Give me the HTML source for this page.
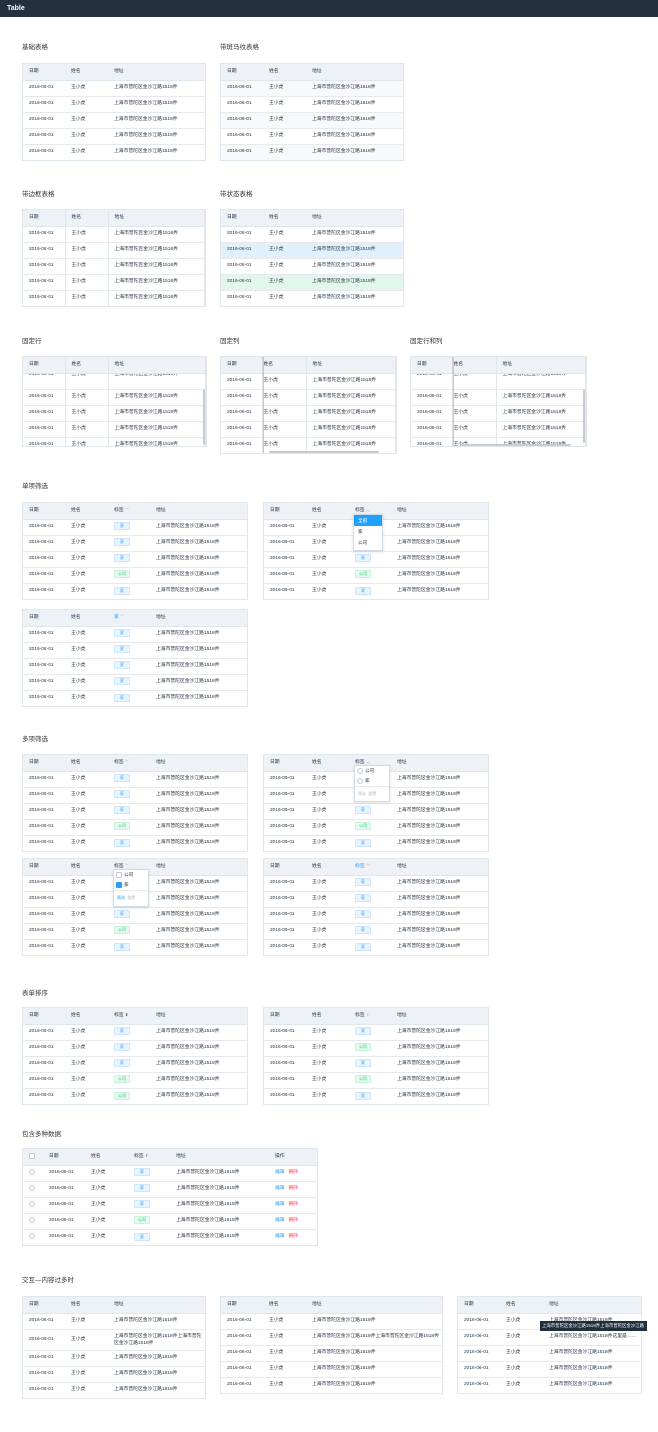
<!DOCTYPE html>
<html><head><meta charset="utf-8"><style>
*{margin:0;padding:0;box-sizing:border-box}
body{width:658px;height:1432px;background:#fff;position:relative;overflow:hidden;font-family:"Liberation Sans","Noto Sans CJK SC",sans-serif;color:#1f2d3d}
.hd{position:absolute;left:0;top:0;width:658px;height:17px;background:#233040;color:#fff;font-weight:bold;font-size:7px;line-height:17px;padding-left:7px}
.ti{position:absolute;font-size:6.5px;color:#333;line-height:8px}
.w{position:absolute;border:1px solid #dfe6ec;overflow:hidden;background:#fff}
table{border-collapse:collapse;table-layout:fixed;width:100%;font-size:4.8px}
th{background:#eef1f6;height:16px;line-height:8px;vertical-align:middle;text-align:left;font-weight:normal;padding-left:6px;border-bottom:1px solid #dfe6ec;white-space:nowrap;overflow:hidden}
td{height:16px;line-height:8px;vertical-align:middle;padding-left:6px;border-bottom:1px solid #e6eaef;white-space:nowrap;overflow:hidden}
tr:last-child td{border-bottom:0}
.bd td,.bd th{border-right:1px solid #dfe6ec}
.st tr:nth-child(even) td{background:#f8f9fb}
.bl td{background:#e2f0fe}.gr td{background:#e2f7ec}
.tg{display:inline-block;width:16px;height:8px;line-height:6px;text-align:center;font-size:4px;border:1px solid #cde6fd;background:#e8f4ff;color:#20a0ff;border-radius:1px;vertical-align:middle}
.tg.g{border-color:#c9f2dc;background:#e7f9f0;color:#13ce66}
.ar{color:#999;font-size:4px}
.dd{position:absolute;background:#fff;border:1px solid #d1dbe5;box-shadow:0 1px 3px rgba(0,0,0,.12);font-size:4.6px;z-index:5}
.dd div{height:11px;line-height:11px;padding-left:4px}
.cb{display:inline-block;width:6px;height:6px;border:1px solid #bfcbd9;border-radius:1px;vertical-align:middle;margin-right:2px;background:#fff}
.rd{border-radius:50%}
.ck{background:#20a0ff;border-color:#20a0ff;position:relative}
.op{color:#20a0ff}.del{color:#ff4949;margin-left:4px}
.sb{position:absolute;background:#c8ccd2;border-radius:1px}
</style></head><body>
<div class="hd">Table</div>

<div class="ti" style="left:22px;top:44px">基础表格</div>
<div class="ti" style="left:220px;top:44px">带斑马纹表格</div>
<div class="w" style="left:22px;top:63px;width:184px"><table><colgroup><col style="width:42px"><col style="width:43px"><col></colgroup>
<tr><th>日期</th><th>姓名</th><th>地址</th></tr>
<tr><td>2016-06-01</td><td>王小虎</td><td>上海市普陀区金沙江路1518弄</td></tr>
<tr><td>2016-06-01</td><td>王小虎</td><td>上海市普陀区金沙江路1518弄</td></tr>
<tr><td>2016-06-01</td><td>王小虎</td><td>上海市普陀区金沙江路1518弄</td></tr>
<tr><td>2016-06-01</td><td>王小虎</td><td>上海市普陀区金沙江路1518弄</td></tr>
<tr><td>2016-06-01</td><td>王小虎</td><td>上海市普陀区金沙江路1518弄</td></tr></table></div>
<div class="w" style="left:220px;top:63px;width:184px"><table class="st"><colgroup><col style="width:42px"><col style="width:43px"><col></colgroup>
<tr><th>日期</th><th>姓名</th><th>地址</th></tr>
<tr><td>2016-06-01</td><td>王小虎</td><td>上海市普陀区金沙江路1518弄</td></tr>
<tr><td>2016-06-01</td><td>王小虎</td><td>上海市普陀区金沙江路1518弄</td></tr>
<tr><td>2016-06-01</td><td>王小虎</td><td>上海市普陀区金沙江路1518弄</td></tr>
<tr><td>2016-06-01</td><td>王小虎</td><td>上海市普陀区金沙江路1518弄</td></tr>
<tr><td>2016-06-01</td><td>王小虎</td><td>上海市普陀区金沙江路1518弄</td></tr></table></div>

<div class="ti" style="left:22px;top:191px">带边框表格</div>
<div class="ti" style="left:220px;top:191px">带状态表格</div>
<div class="w" style="left:22px;top:209px;width:184px"><table class="bd"><colgroup><col style="width:42px"><col style="width:43px"><col></colgroup>
<tr><th>日期</th><th>姓名</th><th>地址</th></tr>
<tr><td>2016-06-01</td><td>王小虎</td><td>上海市普陀区金沙江路1518弄</td></tr>
<tr><td>2016-06-01</td><td>王小虎</td><td>上海市普陀区金沙江路1518弄</td></tr>
<tr><td>2016-06-01</td><td>王小虎</td><td>上海市普陀区金沙江路1518弄</td></tr>
<tr><td>2016-06-01</td><td>王小虎</td><td>上海市普陀区金沙江路1518弄</td></tr>
<tr><td>2016-06-01</td><td>王小虎</td><td>上海市普陀区金沙江路1518弄</td></tr></table></div>
<div class="w" style="left:220px;top:209px;width:184px"><table><colgroup><col style="width:42px"><col style="width:43px"><col></colgroup>
<tr><th>日期</th><th>姓名</th><th>地址</th></tr>
<tr><td>2016-06-01</td><td>王小虎</td><td>上海市普陀区金沙江路1518弄</td></tr>
<tr class="bl"><td>2016-06-01</td><td>王小虎</td><td>上海市普陀区金沙江路1518弄</td></tr>
<tr><td>2016-06-01</td><td>王小虎</td><td>上海市普陀区金沙江路1518弄</td></tr>
<tr class="gr"><td>2016-06-01</td><td>王小虎</td><td>上海市普陀区金沙江路1518弄</td></tr>
<tr><td>2016-06-01</td><td>王小虎</td><td>上海市普陀区金沙江路1518弄</td></tr></table></div>

<div class="ti" style="left:22px;top:338px">固定行</div>
<div class="ti" style="left:220px;top:338px">固定列</div>
<div class="ti" style="left:410px;top:338px">固定行和列</div>
<div class="w" style="left:22px;top:356px;width:185px;height:91px"><table class="bd"><colgroup><col style="width:42px"><col style="width:43px"><col></colgroup>
<tr><th>日期</th><th>姓名</th><th>地址</th></tr>
<tr><td style="height:8px;line-height:2px;vertical-align:top">2016-06-01</td><td style="line-height:2px;vertical-align:top">王小虎</td><td style="line-height:2px;vertical-align:top">上海市普陀区金沙江路1518弄</td></tr>
<tr><td>2016-06-01</td><td>王小虎</td><td>上海市普陀区金沙江路1518弄</td></tr>
<tr><td>2016-06-01</td><td>王小虎</td><td>上海市普陀区金沙江路1518弄</td></tr>
<tr><td>2016-06-01</td><td>王小虎</td><td>上海市普陀区金沙江路1518弄</td></tr>
<tr><td>2016-06-01</td><td>王小虎</td><td>上海市普陀区金沙江路1518弄</td></tr></table>
<div class="sb" style="left:180px;top:32px;width:2px;height:56px"></div></div>
<div class="w" style="left:220px;top:356px;width:177px;height:98px"><table class="bd"><colgroup><col style="width:42px"><col style="width:43px"><col></colgroup>
<tr><th>日期</th><th style="padding-left:0">姓名</th><th>地址</th></tr>
<tr><td>2016-06-01</td><td style="padding-left:0">王小虎</td><td>上海市普陀区金沙江路1518弄</td></tr>
<tr><td>2016-06-01</td><td style="padding-left:0">王小虎</td><td>上海市普陀区金沙江路1518弄</td></tr>
<tr><td>2016-06-01</td><td style="padding-left:0">王小虎</td><td>上海市普陀区金沙江路1518弄</td></tr>
<tr><td>2016-06-01</td><td style="padding-left:0">王小虎</td><td>上海市普陀区金沙江路1518弄</td></tr>
<tr><td>2016-06-01</td><td style="padding-left:0">王小虎</td><td>上海市普陀区金沙江路1518弄</td></tr></table>
<div style="position:absolute;left:41px;top:0;width:2px;height:98px;background:rgba(0,0,0,.12)"></div>
<div class="sb" style="left:48px;top:94px;width:110px;height:2px"></div></div>
<div class="w" style="left:410px;top:356px;width:177px;height:91px"><table class="bd"><colgroup><col style="width:42px"><col style="width:43px"><col></colgroup>
<tr><th>日期</th><th style="padding-left:0">姓名</th><th>地址</th></tr>
<tr><td style="height:8px;line-height:2px;vertical-align:top">2016-06-01</td><td style="padding-left:0;line-height:2px;vertical-align:top">王小虎</td><td style="line-height:2px;vertical-align:top">上海市普陀区金沙江路1518弄</td></tr>
<tr><td>2016-06-01</td><td style="padding-left:0">王小虎</td><td>上海市普陀区金沙江路1518弄</td></tr>
<tr><td>2016-06-01</td><td style="padding-left:0">王小虎</td><td>上海市普陀区金沙江路1518弄</td></tr>
<tr><td>2016-06-01</td><td style="padding-left:0">王小虎</td><td>上海市普陀区金沙江路1518弄</td></tr>
<tr><td>2016-06-01</td><td style="padding-left:0">王小虎</td><td>上海市普陀区金沙江路1518弄</td></tr></table>
<div style="position:absolute;left:41px;top:0;width:2px;height:91px;background:rgba(0,0,0,.12)"></div>
<div class="sb" style="left:172px;top:32px;width:2px;height:54px"></div>
<div class="sb" style="left:50px;top:87px;width:110px;height:2px"></div></div>

<div class="ti" style="left:22px;top:483px">单项筛选</div>
<div class="w" style="left:22px;top:502px;width:226px"><table><colgroup><col style="width:42px"><col style="width:43px"><col style="width:42px"><col></colgroup>
<tr><th>日期</th><th>姓名</th><th>标签 <span class="ar">﹀</span></th><th>地址</th></tr>
<tr><td>2016-06-01</td><td>王小虎</td><td><span class="tg">家</span></td><td>上海市普陀区金沙江路1518弄</td></tr>
<tr><td>2016-06-01</td><td>王小虎</td><td><span class="tg">家</span></td><td>上海市普陀区金沙江路1518弄</td></tr>
<tr><td>2016-06-01</td><td>王小虎</td><td><span class="tg">家</span></td><td>上海市普陀区金沙江路1518弄</td></tr>
<tr><td>2016-06-01</td><td>王小虎</td><td><span class="tg g">公司</span></td><td>上海市普陀区金沙江路1518弄</td></tr>
<tr><td>2016-06-01</td><td>王小虎</td><td><span class="tg">家</span></td><td>上海市普陀区金沙江路1518弄</td></tr></table></div>
<div class="w" style="left:263px;top:502px;width:226px"><table><colgroup><col style="width:42px"><col style="width:43px"><col style="width:42px"><col></colgroup>
<tr><th>日期</th><th>姓名</th><th>标签 <span class="ar">︿</span></th><th>地址</th></tr>
<tr><td>2016-06-01</td><td>王小虎</td><td><span class="tg">家</span></td><td>上海市普陀区金沙江路1518弄</td></tr>
<tr><td>2016-06-01</td><td>王小虎</td><td><span class="tg">家</span></td><td>上海市普陀区金沙江路1518弄</td></tr>
<tr><td>2016-06-01</td><td>王小虎</td><td><span class="tg">家</span></td><td>上海市普陀区金沙江路1518弄</td></tr>
<tr><td>2016-06-01</td><td>王小虎</td><td><span class="tg g">公司</span></td><td>上海市普陀区金沙江路1518弄</td></tr>
<tr><td>2016-06-01</td><td>王小虎</td><td><span class="tg">家</span></td><td>上海市普陀区金沙江路1518弄</td></tr></table></div>
<div class="dd" style="left:353px;top:514px;width:30px;height:37px"><div style="background:#20a0ff;color:#fff">全部</div><div>家</div><div>公司</div></div>
<div class="w" style="left:22px;top:609px;width:226px"><table><colgroup><col style="width:42px"><col style="width:43px"><col style="width:42px"><col></colgroup>
<tr><th>日期</th><th>姓名</th><th style="color:#20a0ff">家 <span class="ar">﹀</span></th><th>地址</th></tr>
<tr><td>2016-06-01</td><td>王小虎</td><td><span class="tg">家</span></td><td>上海市普陀区金沙江路1518弄</td></tr>
<tr><td>2016-06-01</td><td>王小虎</td><td><span class="tg">家</span></td><td>上海市普陀区金沙江路1518弄</td></tr>
<tr><td>2016-06-01</td><td>王小虎</td><td><span class="tg">家</span></td><td>上海市普陀区金沙江路1518弄</td></tr>
<tr><td>2016-06-01</td><td>王小虎</td><td><span class="tg">家</span></td><td>上海市普陀区金沙江路1518弄</td></tr>
<tr><td>2016-06-01</td><td>王小虎</td><td><span class="tg">家</span></td><td>上海市普陀区金沙江路1518弄</td></tr></table></div>

<div class="ti" style="left:22px;top:736px">多项筛选</div>
<div class="w" style="left:22px;top:754px;width:226px"><table><colgroup><col style="width:42px"><col style="width:43px"><col style="width:42px"><col></colgroup>
<tr><th>日期</th><th>姓名</th><th>标签 <span class="ar">﹀</span></th><th>地址</th></tr>
<tr><td>2016-06-01</td><td>王小虎</td><td><span class="tg">家</span></td><td>上海市普陀区金沙江路1518弄</td></tr>
<tr><td>2016-06-01</td><td>王小虎</td><td><span class="tg">家</span></td><td>上海市普陀区金沙江路1518弄</td></tr>
<tr><td>2016-06-01</td><td>王小虎</td><td><span class="tg">家</span></td><td>上海市普陀区金沙江路1518弄</td></tr>
<tr><td>2016-06-01</td><td>王小虎</td><td><span class="tg g">公司</span></td><td>上海市普陀区金沙江路1518弄</td></tr>
<tr><td>2016-06-01</td><td>王小虎</td><td><span class="tg">家</span></td><td>上海市普陀区金沙江路1518弄</td></tr></table></div>
<div class="w" style="left:263px;top:754px;width:226px"><table><colgroup><col style="width:42px"><col style="width:43px"><col style="width:42px"><col></colgroup>
<tr><th>日期</th><th>姓名</th><th>标签 <span class="ar">︿</span></th><th>地址</th></tr>
<tr><td>2016-06-01</td><td>王小虎</td><td><span class="tg">家</span></td><td>上海市普陀区金沙江路1518弄</td></tr>
<tr><td>2016-06-01</td><td>王小虎</td><td><span class="tg">家</span></td><td>上海市普陀区金沙江路1518弄</td></tr>
<tr><td>2016-06-01</td><td>王小虎</td><td><span class="tg">家</span></td><td>上海市普陀区金沙江路1518弄</td></tr>
<tr><td>2016-06-01</td><td>王小虎</td><td><span class="tg g">公司</span></td><td>上海市普陀区金沙江路1518弄</td></tr>
<tr><td>2016-06-01</td><td>王小虎</td><td><span class="tg">家</span></td><td>上海市普陀区金沙江路1518弄</td></tr></table></div>
<div class="dd" style="left:354px;top:765px;width:36px;height:37px"><div style="height:10px;line-height:10px;padding-left:2px"><span class="cb rd"></span>公司</div><div style="height:10px;line-height:10px;padding-left:2px"><span class="cb rd"></span>家</div><div style="border-top:1px solid #e6eaef;color:#bbb;font-size:4px;padding-left:3px;height:13px;line-height:13px">筛选 &nbsp;重置</div></div>
<div class="w" style="left:22px;top:858px;width:226px"><table><colgroup><col style="width:42px"><col style="width:43px"><col style="width:42px"><col></colgroup>
<tr><th>日期</th><th>姓名</th><th>标签 <span class="ar">﹀</span></th><th>地址</th></tr>
<tr><td>2016-06-01</td><td>王小虎</td><td><span class="tg">家</span></td><td>上海市普陀区金沙江路1518弄</td></tr>
<tr><td>2016-06-01</td><td>王小虎</td><td><span class="tg">家</span></td><td>上海市普陀区金沙江路1518弄</td></tr>
<tr><td>2016-06-01</td><td>王小虎</td><td><span class="tg">家</span></td><td>上海市普陀区金沙江路1518弄</td></tr>
<tr><td>2016-06-01</td><td>王小虎</td><td><span class="tg g">公司</span></td><td>上海市普陀区金沙江路1518弄</td></tr>
<tr><td>2016-06-01</td><td>王小虎</td><td><span class="tg">家</span></td><td>上海市普陀区金沙江路1518弄</td></tr></table></div>
<div class="dd" style="left:113px;top:869px;width:36px;height:38px"><div style="height:10px;line-height:10px;padding-left:2px"><span class="cb"></span>公司</div><div style="height:10px;line-height:10px;padding-left:2px"><span class="cb ck"></span>家</div><div style="border-top:1px solid #e6eaef;color:#bbb;font-size:4px;padding-left:3px;height:14px;line-height:14px"><span style="color:#20a0ff">筛选</span> &nbsp;重置</div></div>
<div class="w" style="left:263px;top:858px;width:226px"><table><colgroup><col style="width:42px"><col style="width:43px"><col style="width:42px"><col></colgroup>
<tr><th>日期</th><th>姓名</th><th><span style="color:#20a0ff">标签</span> <span class="ar">﹀</span></th><th>地址</th></tr>
<tr><td>2016-06-01</td><td>王小虎</td><td><span class="tg">家</span></td><td>上海市普陀区金沙江路1518弄</td></tr>
<tr><td>2016-06-01</td><td>王小虎</td><td><span class="tg">家</span></td><td>上海市普陀区金沙江路1518弄</td></tr>
<tr><td>2016-06-01</td><td>王小虎</td><td><span class="tg">家</span></td><td>上海市普陀区金沙江路1518弄</td></tr>
<tr><td>2016-06-01</td><td>王小虎</td><td><span class="tg">家</span></td><td>上海市普陀区金沙江路1518弄</td></tr>
<tr><td>2016-06-01</td><td>王小虎</td><td><span class="tg">家</span></td><td>上海市普陀区金沙江路1518弄</td></tr></table></div>

<div class="ti" style="left:22px;top:990px">表单排序</div>
<div class="w" style="left:22px;top:1007px;width:226px"><table><colgroup><col style="width:42px"><col style="width:43px"><col style="width:42px"><col></colgroup>
<tr><th>日期</th><th>姓名</th><th>标签 <span class="ar" style="color:#555">⬍</span></th><th>地址</th></tr>
<tr><td>2016-06-01</td><td>王小虎</td><td><span class="tg">家</span></td><td>上海市普陀区金沙江路1518弄</td></tr>
<tr><td>2016-06-01</td><td>王小虎</td><td><span class="tg">家</span></td><td>上海市普陀区金沙江路1518弄</td></tr>
<tr><td>2016-06-01</td><td>王小虎</td><td><span class="tg">家</span></td><td>上海市普陀区金沙江路1518弄</td></tr>
<tr><td>2016-06-01</td><td>王小虎</td><td><span class="tg g">公司</span></td><td>上海市普陀区金沙江路1518弄</td></tr>
<tr><td>2016-06-01</td><td>王小虎</td><td><span class="tg g">公司</span></td><td>上海市普陀区金沙江路1518弄</td></tr></table></div>
<div class="w" style="left:263px;top:1007px;width:226px"><table><colgroup><col style="width:42px"><col style="width:43px"><col style="width:42px"><col></colgroup>
<tr><th>日期</th><th>姓名</th><th>标签 <span class="ar" style="color:#ccc">⬍</span></th><th>地址</th></tr>
<tr><td>2016-06-01</td><td>王小虎</td><td><span class="tg">家</span></td><td>上海市普陀区金沙江路1518弄</td></tr>
<tr><td>2016-06-01</td><td>王小虎</td><td><span class="tg g">公司</span></td><td>上海市普陀区金沙江路1518弄</td></tr>
<tr><td>2016-06-01</td><td>王小虎</td><td><span class="tg">家</span></td><td>上海市普陀区金沙江路1518弄</td></tr>
<tr><td>2016-06-01</td><td>王小虎</td><td><span class="tg g">公司</span></td><td>上海市普陀区金沙江路1518弄</td></tr>
<tr><td>2016-06-01</td><td>王小虎</td><td><span class="tg">家</span></td><td>上海市普陀区金沙江路1518弄</td></tr></table></div>

<div class="ti" style="left:22px;top:1131px">包含多种数据</div>
<div class="w" style="left:22px;top:1148px;width:296px"><table><colgroup><col style="width:20px"><col style="width:42px"><col style="width:43px"><col style="width:42px"><col style="width:99px"><col></colgroup>
<tr><th><span class="cb"></span></th><th>日期</th><th>姓名</th><th>标签 <span class="ar">⬍</span></th><th>地址</th><th>操作</th></tr>
<tr><td><span class="cb rd"></span></td><td>2016-06-01</td><td>王小虎</td><td><span class="tg">家</span></td><td>上海市普陀区金沙江路1518弄</td><td><span class="op">编辑</span><span class="del">删除</span></td></tr>
<tr><td><span class="cb rd"></span></td><td>2016-06-01</td><td>王小虎</td><td><span class="tg">家</span></td><td>上海市普陀区金沙江路1518弄</td><td><span class="op">编辑</span><span class="del">删除</span></td></tr>
<tr><td><span class="cb rd"></span></td><td>2016-06-01</td><td>王小虎</td><td><span class="tg">家</span></td><td>上海市普陀区金沙江路1518弄</td><td><span class="op">编辑</span><span class="del">删除</span></td></tr>
<tr><td><span class="cb rd"></span></td><td>2016-06-01</td><td>王小虎</td><td><span class="tg g">公司</span></td><td>上海市普陀区金沙江路1518弄</td><td><span class="op">编辑</span><span class="del">删除</span></td></tr>
<tr><td><span class="cb rd"></span></td><td>2016-06-01</td><td>王小虎</td><td><span class="tg">家</span></td><td>上海市普陀区金沙江路1518弄</td><td><span class="op">编辑</span><span class="del">删除</span></td></tr></table></div>

<div class="ti" style="left:22px;top:1277px">交互—内容过多时</div>
<div class="w" style="left:22px;top:1296px;width:184px"><table><colgroup><col style="width:42px"><col style="width:43px"><col></colgroup>
<tr><th>日期</th><th>姓名</th><th>地址</th></tr>
<tr><td>2016-06-01</td><td>王小虎</td><td>上海市普陀区金沙江路1518弄</td></tr>
<tr><td style="height:21px">2016-06-01</td><td>王小虎</td><td style="white-space:normal;line-height:7px">上海市普陀区金沙江路1518弄上海市普陀区金沙江路1518弄</td></tr>
<tr><td>2016-06-01</td><td>王小虎</td><td>上海市普陀区金沙江路1518弄</td></tr>
<tr><td>2016-06-01</td><td>王小虎</td><td>上海市普陀区金沙江路1518弄</td></tr>
<tr><td>2016-06-01</td><td>王小虎</td><td>上海市普陀区金沙江路1518弄</td></tr></table></div>
<div class="w" style="left:220px;top:1296px;width:223px"><table><colgroup><col style="width:42px"><col style="width:43px"><col></colgroup>
<tr><th>日期</th><th>姓名</th><th>地址</th></tr>
<tr><td>2016-06-01</td><td>王小虎</td><td>上海市普陀区金沙江路1518弄</td></tr>
<tr><td>2016-06-01</td><td>王小虎</td><td>上海市普陀区金沙江路1518弄上海市普陀区金沙江路1518弄</td></tr>
<tr><td>2016-06-01</td><td>王小虎</td><td>上海市普陀区金沙江路1518弄</td></tr>
<tr><td>2016-06-01</td><td>王小虎</td><td>上海市普陀区金沙江路1518弄</td></tr>
<tr><td>2016-06-01</td><td>王小虎</td><td>上海市普陀区金沙江路1518弄</td></tr></table></div>
<div class="w" style="left:457px;top:1296px;width:185px"><table><colgroup><col style="width:42px"><col style="width:43px"><col></colgroup>
<tr><th>日期</th><th>姓名</th><th>地址</th></tr>
<tr><td>2016-06-01</td><td>王小虎</td><td>上海市普陀区金沙江路1518弄</td></tr>
<tr><td>2016-06-01</td><td>王小虎</td><td>上海市普陀区金沙江路1518弄这里是……</td></tr>
<tr><td>2016-06-01</td><td>王小虎</td><td>上海市普陀区金沙江路1518弄</td></tr>
<tr><td>2016-06-01</td><td>王小虎</td><td>上海市普陀区金沙江路1518弄</td></tr>
<tr><td>2016-06-01</td><td>王小虎</td><td>上海市普陀区金沙江路1518弄</td></tr></table></div>
<div style="position:absolute;left:540px;top:1321px;width:107px;height:10px;background:#1f2d3d;color:#fff;font-size:4.4px;line-height:10px;padding-left:2px;white-space:nowrap;overflow:hidden;z-index:6">上海市普陀区金沙江路1518弄上海市普陀区金沙江路</div>
</body></html>
